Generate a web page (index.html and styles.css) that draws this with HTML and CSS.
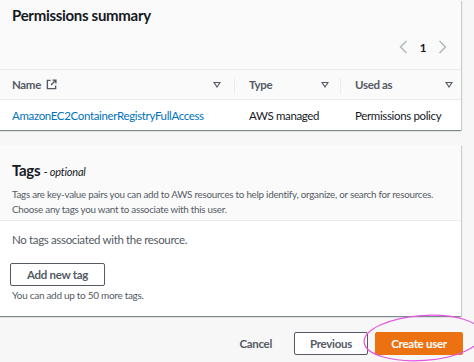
FILE: index.html
```html
<!DOCTYPE html>
<html lang="en">
<head>
<meta charset="utf-8">
<title>Review and create</title>
<link rel="stylesheet" href="styles.css">
</head>
<body>
<div class="page">
  <section class="card perm">
    <div class="card-head perm-head">
      <h2 class="title">Permissions summary</h2>
      <div class="pager">
        <span class="chev">
          <svg width="9" height="14" viewBox="0 0 9 14"><path d="M7.5 1 L1.5 7 L7.5 13" fill="none" stroke="#aab7b8" stroke-width="1.4"/></svg>
        </span>
        <span class="page-num">1</span>
        <span class="chev">
          <svg width="9" height="14" viewBox="0 0 9 14"><path d="M1.5 1 L7.5 7 L1.5 13" fill="none" stroke="#aab7b8" stroke-width="1.4"/></svg>
        </span>
      </div>
    </div>
    <div class="table">
      <div class="row head-row">
        <div class="cell c1">
          <span class="th">Name
            <svg class="ext" width="11" height="11" viewBox="0 0 12 12"><path d="M5 1.5 H1.5 V10.5 H10.5 V7" fill="none" stroke="#545b64" stroke-width="1.5"/><path d="M7 1.2 H10.8 V5 M10.6 1.4 L5.5 6.5" fill="none" stroke="#545b64" stroke-width="1.5"/></svg>
          </span>
          <span class="sort"></span>
        </div>
        <div class="cell c2"><span class="th">Type</span><span class="sort"></span></div>
        <div class="cell c3"><span class="th">Used as</span><span class="sort"></span></div>
      </div>
      <div class="row data-row">
        <div class="cell c1"><a class="link" href="#">AmazonEC2ContainerRegistryFullAccess</a></div>
        <div class="cell c2">AWS managed</div>
        <div class="cell c3">Permissions policy</div>
      </div>
    </div>
  </section>

  <section class="card tags">
    <div class="card-head tags-head">
      <h2 class="title">Tags <i class="opt">- optional</i></h2>
      <p class="desc">Tags are key-value pairs you can add to AWS resources to help identify, organize, or search for resources.<br>Choose any tags you want to associate with this user.</p>
    </div>
    <div class="card-body">
      <p class="empty">No tags associated with the resource.</p>
      <button class="btn add">Add new tag</button>
      <p class="hint">You can add up to 50 more tags.</p>
    </div>
  </section>

  <div class="actions">
    <button class="btn-link">Cancel</button>
    <button class="btn prev">Previous</button>
    <button class="btn primary">Create user</button>
  </div>
  <svg class="circle" width="130" height="52" viewBox="0 0 130 52"><ellipse cx="63" cy="25" rx="59" ry="22.5" fill="none" stroke="#e455e0" stroke-width="1.2" transform="rotate(-4 63 25)"/></svg>
</div>
</body>
</html>
```

FILE: styles.css
```css
* { box-sizing: border-box; }
html, body { margin: 0; padding: 0; }
body {
  background: #f7f7f7;
  font-family: Lato, "Open Sans", sans-serif;
  color: #16191f;
  width: 474px;
  height: 362px;
  overflow: hidden;
  letter-spacing: -0.35px;
}
.page {
  padding: 0 13px 0 0;
  position: relative;
}
.card {
  background: #fff;
  margin-left: -2px;
  box-shadow: 0 1px 1px 0 rgba(0,28,36,.3), 1px 1px 1px 0 rgba(0,28,36,.15), -1px 1px 1px 0 rgba(0,28,36,.15);
}
.card-head {
  background: #fafafa;
  border-bottom: 1px solid #eaeded;
  padding: 0 14px;
}
.title {
  margin: 0;
  font-size: 15px;
  line-height: 20px;
  font-weight: 700;
  letter-spacing: -0.3px;
}
.perm-head {
  height: 70px;
  padding-top: 5px;
}
.pager {
  display: flex;
  align-items: center;
  justify-content: flex-end;
  gap: 12px;
  margin-top: 15px;
  padding-right: 0;
}
.chev { display: flex; }
.page-num { font-size: 11.5px; font-weight: 700; }
.table { font-size: 11.5px; }
.row { display: flex; }
.head-row {
  height: 30px;
  background: #fafafa;
  border-bottom: 1px solid #eaeded;
  align-items: center;
}
.data-row { height: 30px; align-items: center; }
.cell {
  padding: 0 14px;
  display: flex;
  align-items: center;
  justify-content: space-between;
  position: relative;
  white-space: nowrap;
}
.c1 { width: 237px; }
.c2 { width: 106px; padding-right: 12px; }
.c3 { flex: 1; padding-right: 8px; }
.head-row .c2::before, .head-row .c3::before {
  content: "";
  position: absolute;
  left: -1px;
  top: 0;
  height: 16px;
  border-left: 1px solid #eaeded;
}
.th { font-weight: 700; color: #545b64; display: flex; align-items: center; gap: 5px; }
.sort {
  width: 0; height: 0;
  border-left: 4px solid transparent;
  border-right: 4px solid transparent;
  border-top: 6px solid #545b64;
  position: relative;
}
.sort::after {
  content: "";
  position: absolute;
  left: -2px; top: -5px;
  border-left: 2px solid transparent;
  border-right: 2px solid transparent;
  border-top: 3px solid #fafafa;
}
.link { color: #0073bb; text-decoration: none; }
.tags { margin-top: 15px; }
.tags-head { padding-top: 15px; height: 76px; }
.opt { font-size: 11px; font-weight: 400; letter-spacing: -0.2px; }
.desc {
  margin: 5px 0 0;
  font-size: 9.8px;
  line-height: 15px;
  letter-spacing: -0.25px;
  color: #545b64;
}
.card-body { padding: 11px 14px 14px; }
.empty {
  margin: 0;
  font-size: 11.5px;
  line-height: 16px;
  color: #545b64;
}
.btn {
  font-family: inherit;
  font-size: 11.5px;
  font-weight: 700;
  letter-spacing: -0.3px;
  color: #545b64;
  background: #fff;
  border: 1px solid #545b64;
  border-radius: 2px;
  height: 23px;
  padding: 0;
  line-height: 20px;
  display: block;
}
.btn.add { margin-top: 15px; width: 95px; margin-left: -2px; }
.hint {
  margin: 3px 0 0;
  font-size: 10px;
  line-height: 13px;
  letter-spacing: -0.3px;
  color: #545b64;
}
.actions {
  display: flex;
  justify-content: flex-end;
  align-items: center;
  gap: 7px;
  margin-top: 16px;
}
.btn-link {
  font-family: inherit;
  background: none;
  border: 0;
  font-size: 11.5px;
  font-weight: 700;
  letter-spacing: -0.3px;
  color: #545b64;
  padding: 0 15px 0 0;
}
.btn.prev { width: 74px; }
.btn.primary {
  background: #ec7211;
  border-color: #ec7211;
  color: #fff;
  width: 88px;
  margin-right: -2px;
}
.circle {
  position: absolute;
  left: 360px;
  top: 313px;
}
```
